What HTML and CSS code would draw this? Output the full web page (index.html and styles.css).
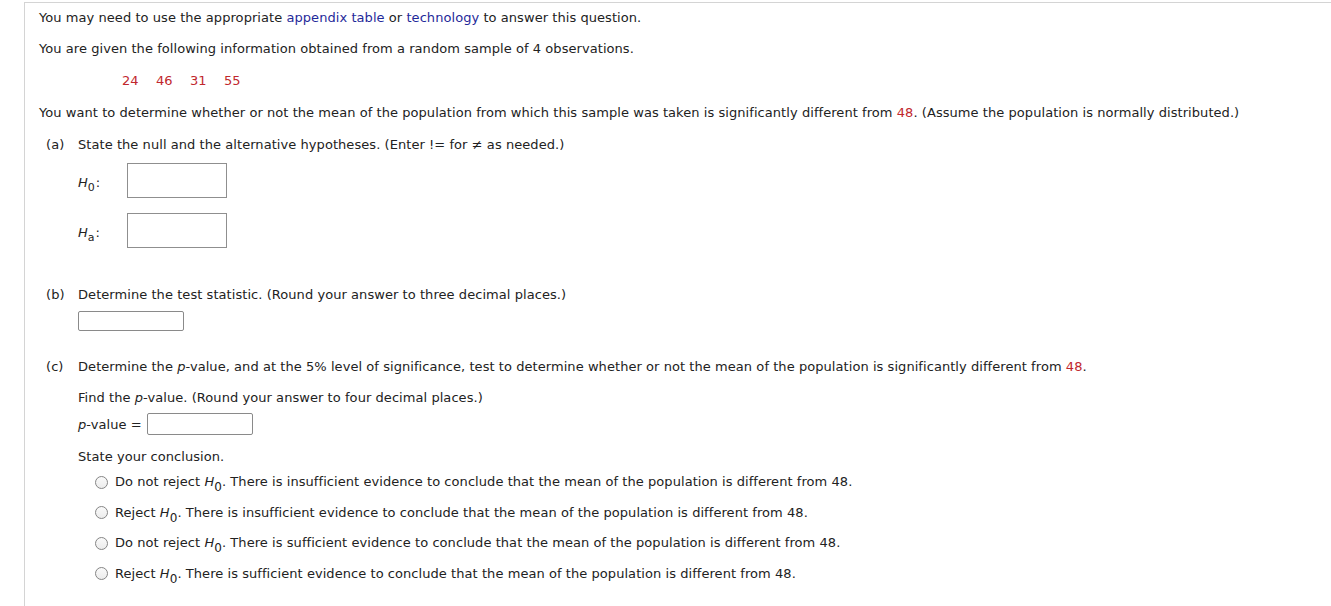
FILE: index.html
```html
<!DOCTYPE html>
<html>
<head>
<meta charset="utf-8">
<link rel="stylesheet" href="styles.css">
</head>
<body>
<div class="frame">
  <div class="line l1">You may need to use the appropriate <span class="link">appendix table</span> or <span class="link">technology</span> to answer this question.</div>
  <div class="line l2">You are given the following information obtained from a random sample of 4 observations.</div>
  <div class="line nums"><span>24</span><span>46</span><span>31</span><span>55</span></div>
  <div class="line l4">You want to determine whether or not the mean of the population from which this sample was taken is significantly different from <span class="red">48</span>. (Assume the population is normally distributed.)</div>

  <div class="line part pa"><span class="tag">(a)</span><span>State the null and the alternative hypotheses. (Enter != for &#8800; as needed.)</span></div>
  <div class="hrow h0"><span class="hlabel"><i>H</i><sub>0</sub>:</span><span class="hbox"></span></div>
  <div class="hrow ha"><span class="hlabel"><i>H</i><sub>a</sub>:</span><span class="hbox"></span></div>

  <div class="line part pb"><span class="tag">(b)</span><span>Determine the test statistic. (Round your answer to three decimal places.)</span></div>
  <div class="sub bbox-row"><span class="tbox"></span></div>

  <div class="line part pc"><span class="tag">(c)</span><span>Determine the <i>p</i>-value, and at the 5% level of significance, test to determine whether or not the mean of the population is significantly different from <span class="red">48</span>.</span></div>
  <div class="line sub find">Find the <i>p</i>-value. (Round your answer to four decimal places.)</div>
  <div class="sub pv-row"><span><i>p</i>-value =</span><span class="tbox pv"></span></div>
  <div class="line sub state">State your conclusion.</div>
  <div class="radios">
    <div class="radio"><span class="circle"></span><span>Do not reject <i>H</i><sub class="low">0</sub>. There is insufficient evidence to conclude that the mean of the population is different from 48.</span></div>
    <div class="radio"><span class="circle"></span><span>Reject <i>H</i><sub class="low">0</sub>. There is insufficient evidence to conclude that the mean of the population is different from 48.</span></div>
    <div class="radio"><span class="circle"></span><span>Do not reject <i>H</i><sub class="low">0</sub>. There is sufficient evidence to conclude that the mean of the population is different from 48.</span></div>
    <div class="radio"><span class="circle"></span><span>Reject <i>H</i><sub class="low">0</sub>. There is sufficient evidence to conclude that the mean of the population is different from 48.</span></div>
  </div>
</div>
</body>
</html>
```

FILE: styles.css
```css
html, body {
  margin: 0;
  padding: 0;
  background: #fff;
}
body {
  font-family: Verdana, "DejaVu Sans", sans-serif;
  font-size: 13px;
  letter-spacing: 0.06px;
  color: #222;
}
.frame {
  margin-top: 2px;
  margin-left: 24px;
  border-top: 1px solid #d4d4d4;
  border-left: 1px solid #d4d4d4;
  padding: 7px 0 0 14px;
  height: 604px;
  box-sizing: border-box;
}
.line {
  line-height: 16px;
  white-space: nowrap;
}
.link { color: #1f2a9a; }
.red { color: #c1272d; }
.l2 { margin-top: 15px; }
.nums {
  margin-top: 16px;
  padding-left: 83px;
  display: flex;
  gap: 12px;
  color: #c1272d;
}
.nums span { width: 22px; }
.l4 { margin-top: 16px; }
.part {
  display: flex;
  padding-left: 7px;
}
.tag { width: 32px; }
.pa { margin-top: 16px; }
.hrow {
  display: flex;
  align-items: center;
  padding-left: 39px;
  height: 35px;
}
.h0 { margin-top: 10px; }
.ha { margin-top: 15px; }
.hlabel {
  width: 49px;
  padding-top: 4px;
  font-size: 13px;
  letter-spacing: 0;
}
.hlabel sub {
  font-size: 11px;
  vertical-align: -4px;
  line-height: 0;
  margin-right: 1px;
}
.hbox {
  width: 100px;
  height: 35px;
  box-sizing: border-box;
  border: 1px solid #8f8f8f;
}
.pb { margin-top: 39px; }
.sub { padding-left: 39px; }
.bbox-row {
  margin-top: 8px;
  display: flex;
}
.tbox {
  display: block;
  width: 106px;
  height: 20px;
  box-sizing: border-box;
  border: 1px solid #8a8a8a;
  border-radius: 2px;
}
.pc { margin-top: 28px; }
.find { margin-top: 15px; }
.pv-row {
  margin-top: 7px;
  display: flex;
  align-items: center;
  gap: 5px;
}
.tbox.pv { height: 22px; }
.state { margin-top: 14px; }
.radios {
  margin-top: 9px;
  padding-left: 56px;
  display: flex;
  flex-direction: column;
  gap: 14.5px;
}
.radio {
  display: flex;
  align-items: center;
  line-height: 16px;
  white-space: nowrap;
}
.circle {
  width: 13px;
  height: 13px;
  box-sizing: border-box;
  border: 1px solid #858585;
  border-radius: 50%;
  background: linear-gradient(#fafafa, #ececec);
  margin-right: 7px;
  flex: none;
}
sub.low {
  font-size: 12px;
  vertical-align: -5px;
  line-height: 0;
}
i { font-style: italic; }
```
